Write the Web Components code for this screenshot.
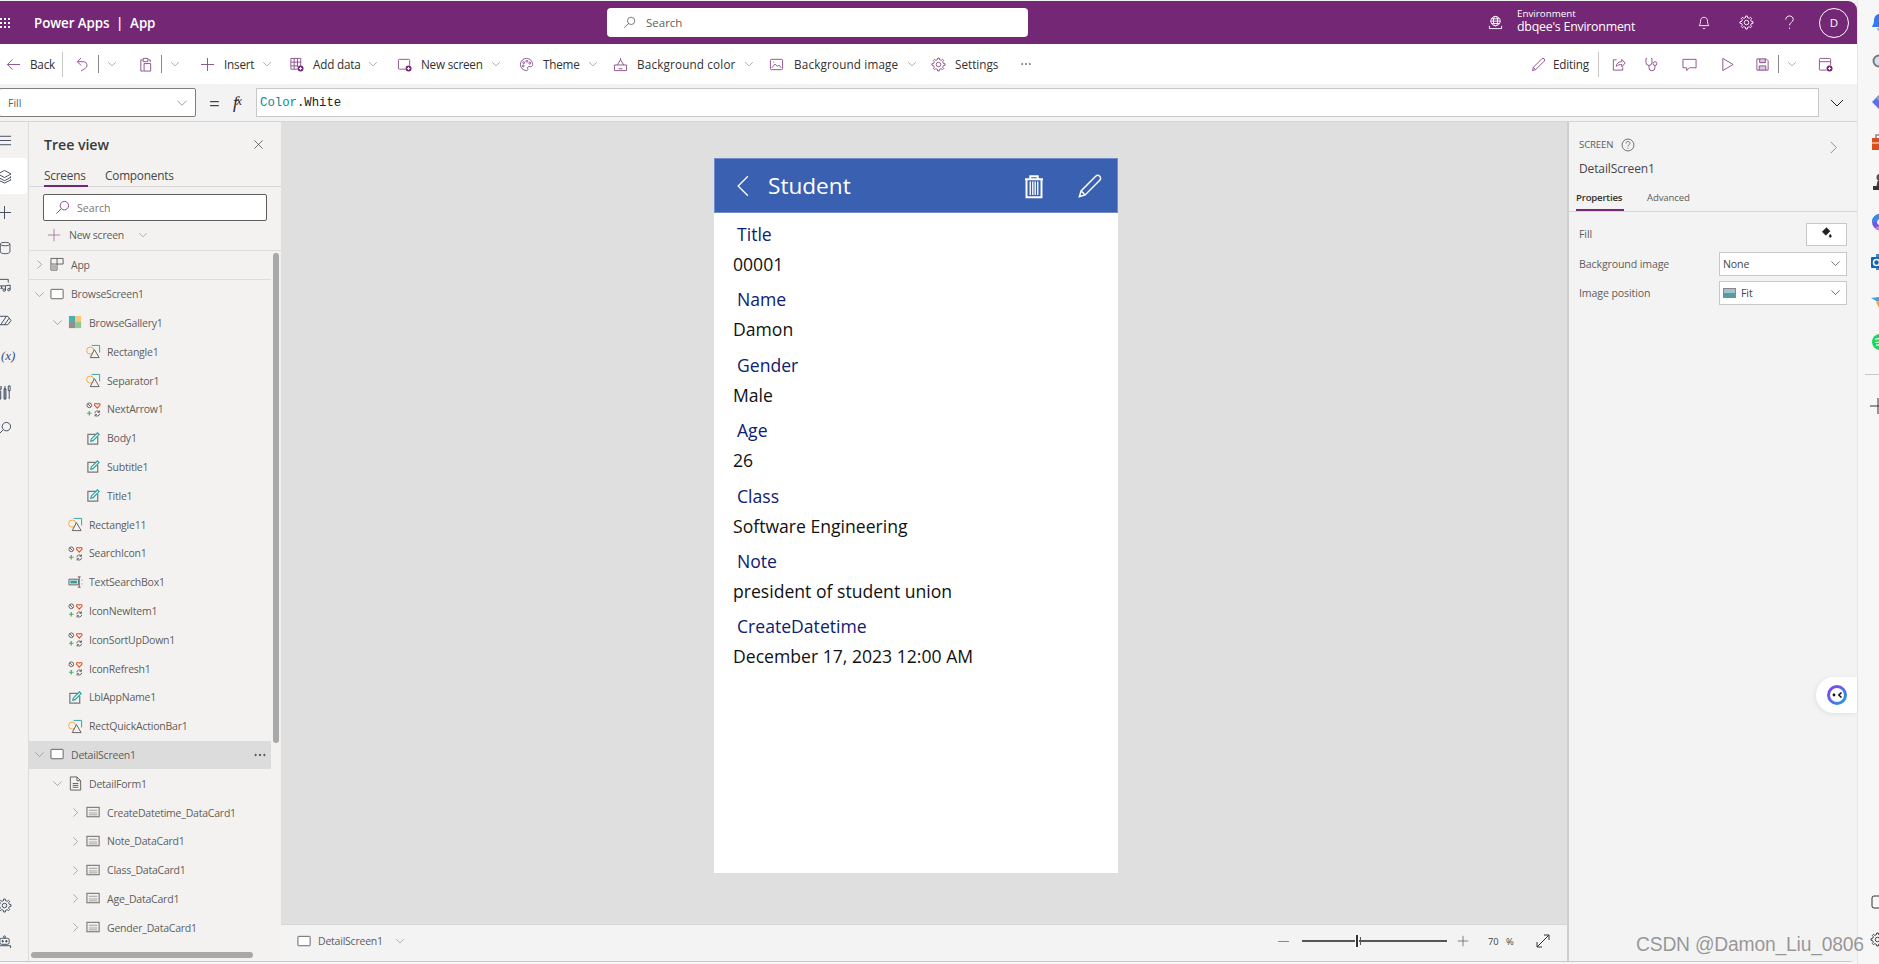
<!DOCTYPE html>
<html lang="en">
<head>
<meta charset="utf-8">
<title>Power Apps</title>
<style>
    html, body { margin: 0; height: 100%; overflow: hidden; background: #f7f7f7; }
    body { font-family: "Open Sans", "Noto Sans", sans-serif; font-size: 12px; color: #323130; }
</style>
</head>
<body>
<pa-app></pa-app>

<script>
function gear(c, r1, r2, n) {
    let d = '';
    for (let i = 0; i < n; i++) {
        const a = i * 2 * Math.PI / n, w = Math.PI / n;
        const pts = [[r1, a - w * 0.55], [r2, a - w * 0.3], [r2, a + w * 0.3], [r1, a + w * 0.55]];
        pts.forEach((p, j) => {
            const x = (c + p[0] * Math.cos(p[1])).toFixed(2), y = (c + p[0] * Math.sin(p[1])).toFixed(2);
            d += (i === 0 && j === 0 ? 'M' : 'L') + x + ' ' + y;
        });
    }
    return d + 'Z';
}

const PURPLE_DOT = '<circle cx="12.3" cy="12.3" r="3.2" fill="#742774" stroke="none"/><path d="M12.3 10.7v3.2M10.7 12.3h3.2" stroke="#fff"/>';

const icons = {
    back: '<path d="M15 8H1.5M7 2.5 1.5 8 7 13.5"/>',
    undo: '<path d="M6.5 1 2.5 5l4 4M2.5 5h6.5a3.8 3.8 0 0 1 1.5 7.3L6.5 15"/>',
    paste: '<path d="M5 3H3v12h3M11 3h2v2.5M5.5 1.5h5V5h-5zM6.5 7h7v8h-7z"/>',
    plus: '<path d="M8 1v14M1 8h14"/>',
    down: '<path d="m2 5 6 6 6-6"/>',
    right: '<path d="m5 2 6 6-6 6"/>',
    close: '<path d="m2 2 12 12M14 2 2 14"/>',
    table: '<path d="M2 1.5h10.5v8M2 1.5V13h7M2 5.5h10.5M2 9.5h8M5.5 1.5V13M9 1.5v9"/>' + PURPLE_DOT,
    newscreen: '<path d="M9 13H2.5a1 1 0 0 1-1-1V3.5a1 1 0 0 1 1-1h10a1 1 0 0 1 1 1V9"/>' + PURPLE_DOT,
    palette: '<path d="M8 1.5a6.5 6.5 0 1 0 0 13c1.6 0 1.8-1.2 1.2-2-.7-1 0-2.2 1.2-2.2h2.2c1.2 0 1.9-.8 1.9-2.3 0-3.600-2.900-6.500-6.500-6.500Z"/><circle cx="5" cy="6" r="1"/><circle cx="8.500" cy="4.500" r="1"/><circle cx="11.500" cy="6.500" r="1"/><circle cx="4.500" cy="9.500" r="1"/>',
    bgcolor: '<path d="M1.500 8.500h13v6h-13zM4.500 8.500 8 3l3.500 5.500M8 1v2"/><path d="M6 12.500h4"/>',
    bgimage: '<rect x="1.500" y="2.500" width="13" height="11" rx="1"/><path d="m3 11.500 3.500-4 2.500 2.500 1.500-1.500 2.500 3M4.500 5.500h1"/>',
    gear: '<path d="' + gear(8, 5.3, 7, 8) + '"/><circle cx="8" cy="8" r="2.400"/>',
    more: '<circle cx="3" cy="8" r=".8" fill="currentColor"/><circle cx="8" cy="8" r=".8" fill="currentColor"/><circle cx="13" cy="8" r=".8" fill="currentColor"/>',
    pencil: '<path d="M1.500 14.500 2.500 11 11.500 2a1.500 1.500 0 0 1 2.500 2.500L5 13.500ZM2.500 11 5 13.500"/>',
    share: '<path d="M6 3H2.500v11h10v-3"/><path d="M5.500 10c.3-3 2.500-5 6-5V2.500L15 6.500l-3.500 4V8c-2.500 0-4.500.5-6 2Z"/>',
    stetho: '<path d="M2 1.500H1v4.300a3.200 3.200 0 0 0 6.400 0V1.500h-1M4.200 9v2.500a3.200 3.200 0 0 0 6.400 0V9"/><circle cx="10.600" cy="7" r="2"/>',
    comment: '<path d="M1 2.500h14v9H8l-3 3v-3H1z"/>',
    play: '<path d="M3 1.500v13L14 8Z"/>',
    save: '<path d="M2 2h10l2 2v10H2zM5 2v4h6V2M4.500 14V9.500h7V14"/><path d="M5 10h6v4H5zM5 2.500h6V6H5z" fill="currentColor" opacity=".3"/>',
    calendar: '<path d="M9 14H2.500a1 1 0 0 1-1-1V2.500a1 1 0 0 1 1-1h10a1 1 0 0 1 1 1V9M1.500 5h12"/>' + PURPLE_DOT,
    search: '<circle cx="10" cy="6" r="4.500"/><path d="M6.800 9.200 1.500 14.500"/>',
    bell: '<path d="M8 1.500c-2.800 0-4 2-4 4.500 0 3-1.500 5-1.500 5h11S12 9 12 6c0-2.500-1.200-4.500-4-4.500ZM6.500 13.500a1.600 1.600 0 0 0 3 0"/>',
    globe: '<circle cx="8" cy="6.500" r="5"/><ellipse cx="8" cy="6.500" rx="2.200" ry="5"/><path d="M3 6.500h10M3.800 4h8.400M3.800 9h8.400M1.500 11.500V14.500h13v-3"/>',
    menu: '<path d="M0 3.500h15M0 8h15M0 12.500h15"/>',
    layers: '<path d="m8 1.500 7 3.800-7 3.800-7-3.800zM2 8l-1 .7L8 12.500l7-3.800-1-.7M2 10.800l-1 .7L8 15l7-3.500-1-.7"/>',
    db: '<ellipse cx="7" cy="3.500" rx="5.500" ry="2"/><path d="M1.500 3.500v9c0 1.100 2.500 2 5.500 2s5.500-.9 5.500-2v-9"/>',
    media: '<path d="M9 9.500H1v-7h11V6M3.500 12h3M5 9.500V12"/><path d="M9 14.500V9.500l5-1v5"/><circle cx="7.700" cy="14" r="1.300"/><circle cx="12.700" cy="13.500" r="1.300"/>',
    tags: '<path d="M1.500 3.500h10l3.500 4.500-3.500 4.500h-10zM4 12.500 10 3.500M8 12.500l5-7"/>',
    tools: '<path d="M3 1v5M1.500 1v3.500h3V1M3 6.500V15M2 6.500h2V15H2zM8.500 1v14M7.500 4h2v11h-2zM12 1h2v5h-2zM13 6v9"/>',
    bot: '<circle cx="8" cy="3" r="1"/><rect x="3" y="4.500" width="10" height="6.500" rx="2"/><path d="M1.500 15v-2.500h13V15"/><circle cx="6" cy="7.700" r=".8" fill="currentColor"/><circle cx="10" cy="7.700" r=".8" fill="currentColor"/>',
    trash: '<path d="M2 3.500h12M5.500 3.500V1.500h5v2M3 3.500h10v12H3z" stroke-width="1.300"/><path d="M5.500 5v9M7.200 5v9M8.800 5v9M10.500 5v9"/>',
    help: '<circle cx="8" cy="8" r="6.800"/><path d="M5.800 6.200C5.800 4.800 6.800 4 8 4s2.200.8 2.200 2c0 1.800-2.200 1.800-2.200 3.700M8 11.300v1"/>',
    bucket: '<path d="M8 1 2 7l5 5 6-6z" fill="currentColor"/><path d="M13.500 10.500s-1.500 2-1.500 3a1.500 1.500 0 0 0 3 0c0-1-1.500-3-1.500-3Z" fill="currentColor"/>',
    question: '<path d="M4 4.800C4 2.600 5.800 1 8 1s4 1.500 4 3.600c0 3.200-4 3.400-4 6.400M8 13.500v1.300"/>',

    screen: '<rect x="1" y="2.500" width="13" height="10" rx=".5" fill="#fff" stroke="#605e5c"/>',
    app: '<path d="M1 1.500h13v6h-6.500v6.500H1zM1 7.500h6.500V1.500" stroke="#605e5c"/><rect x="1.500" y="8" width="5.500" height="5.500" fill="#b5b3b1" stroke="none"/>',
    gallery: '<g stroke="none"><rect x="1" y="1" width="6.500" height="6.500" fill="#45b1b1"/><rect x="7.500" y="1" width="6.500" height="6.500" fill="#fcc57d"/><rect x="1" y="7.500" width="6.500" height="6.500" fill="#8f8f8f"/><rect x="7.500" y="7.500" width="6.500" height="6.500" fill="#8ecb8e"/></g>',
    shape: '<path d="M6 1.500h8.500V9" stroke="#2ea3a3"/><circle cx="4.500" cy="7" r="3.800" stroke="#f2a93b" fill="none"/><path d="M9 6 14 14.500H4.500Z" stroke="#605e5c" fill="#f3f2f1"/>',
    icons4: '<circle cx="3.500" cy="3.500" r="2.500" stroke="#605e5c"/><path d="M2 2l3 3" stroke="#605e5c"/><path d="M12 6.500 9.300 3.700c-1-1.300.8-3 2.700-1.500 1.900-1.500 3.700.2 2.700 1.500Z" stroke="#e3572e" stroke-width="1.200"/><path d="M3.500 9.500v5M1 12h5" stroke="#4caf63" stroke-width="1.300"/><path d="M9.500 12a2.500 2.500 0 0 1 4.500-1.500M14.500 12.500a2.500 2.500 0 0 1-4.500 1.500M14.300 9v2h-2M9.700 15.500v-2h2" stroke="#605e5c"/>',
    label: '<path d="M11 3.500H2v10.500h10.500V6.500" stroke="#7a7876" stroke-width="1.300"/><path d="m5 11 .7-2.500 6.500-6.500 1.800 1.800-6.500 6.500z" stroke="#1ea3a3" stroke-width="1.200"/>',
    textbox: '<path d="M1 4.500h10v6H1z" stroke="#605e5c"/><rect x="2.500" y="6" width="7" height="3" fill="#2a9c9c" stroke="none"/><path d="M10.500 2h3M12 2v11M10.500 13h3M14.500 5.500h.8M14.500 9.500h.8" stroke="#605e5c"/>',
    form: '<path d="M2.500 1h7l4 4v10h-11zM9.500 1v4h4M5 8h6M5 10h6M5 12h6" stroke="#605e5c"/>',
    card: '<rect x="1" y="2.500" width="13" height="10" stroke="#7a7876" stroke-width="1.200"/><rect x="3" y="5" width="9" height="1.500" fill="#b5b3b1" stroke="none"/><path d="M3 8.500h9M3 10.500h9" stroke="#a19f9d"/>'
};

class PaIcon extends HTMLElement {
    constructor() {
        super();
        this.attachShadow({ mode: 'open' });
    }

    connectedCallback() {
        const size = this.getAttribute('size') || 16;
        const name = this.getAttribute('name');
        this.shadowRoot.innerHTML = `
            <style>:host { display: inline-flex; flex: none; width: ${size}px; height: ${size}px; } svg { display: block; overflow: visible; }</style>
            <svg width="${size}" height="${size}" viewBox="0 0 16 16" fill="none" stroke="currentColor" stroke-width="${this.getAttribute('sw') || 1}">${icons[name] || ''}</svg>`;
    }
}

const headerTemplate = document.createElement('template');
headerTemplate.innerHTML = `
    <style>
        :host { display: flex; align-items: center; height: 43px; margin-top: 1px; background: #742774; color: #fff; border-top-right-radius: 9px; position: relative; }
        .waffle { display: grid; grid-template-columns: repeat(3, 2px); gap: 2px; margin-left: 0; width: 10px; }
        .waffle i { width: 2px; height: 2px; background: #fff; }
        .brand { margin-left: 24px; width: 573px; font-weight: 600; font-size: 13.4px; white-space: pre; letter-spacing: -.1px; }
        .search { display: flex; align-items: center; width: 421px; height: 29px; box-sizing: border-box; background: #fff; border-radius: 4px; color: #605e5c; padding-left: 16px; gap: 10px; font-size: 11.5px; }
        .env { display: flex; align-items: center; margin-left: 460px; width: 194px; gap: 14px; flex: none; }
        .env .t { line-height: 13px; margin-top: -6px; }
        .env small { display: block; font-size: 9.8px; }
        .env span { font-size: 12.4px; letter-spacing: -.25px; white-space: nowrap; }
        .act { width: 43px; display: flex; justify-content: center; }
        .avatar { box-sizing: border-box; width: 30px; height: 30px; border: 1px solid #fff; border-radius: 50%; display: flex; align-items: center; justify-content: center; font-size: 11.5px; margin-left: 8px; }
    </style>
    <div class="waffle"><i></i><i></i><i></i><i></i><i></i><i></i><i></i><i></i><i></i></div>
    <div class="brand">Power Apps  |  App</div>
    <div class="search"><pa-icon name="search" size="13"></pa-icon>Search</div>
    <div class="env">
        <pa-icon name="globe" size="15"></pa-icon>
        <div class="t"><small>Environment</small><span>dbqee's Environment</span></div>
    </div>
    <div class="act"><pa-icon name="bell" size="14"></pa-icon></div>
    <div class="act"><pa-icon name="gear" size="15"></pa-icon></div>
    <div class="act"><pa-icon name="question" size="15"></pa-icon></div>
    <div class="avatar">D</div>
`;

class PaHeader extends HTMLElement {
    constructor() {
        super();
        this.attachShadow({ mode: 'open' });
        this.shadowRoot.appendChild(headerTemplate.content.cloneNode(true));
    }
}

class TbItem extends HTMLElement {
    constructor() {
        super();
        this.attachShadow({ mode: 'open' });
    }

    connectedCallback() {
        const icon = this.getAttribute('icon');
        const label = this.getAttribute('label');
        const chev = this.hasAttribute('chevron');
        this.shadowRoot.innerHTML = `
            <style>
                :host { display: flex; align-items: center; flex: none; height: 100%; gap: 9px; color: #323130; font-size: 11.7px; letter-spacing: -.2px; white-space: nowrap; }
                pa-icon { color: #8b4f8b; }
                .c { margin-left: -1px; }
            </style>
            ${icon ? `<pa-icon name="${icon}" size="15"></pa-icon>` : ''}
            ${label ? `<span>${label}</span>` : ''}
            ${chev ? '<pa-icon class="c" name="down" size="10" style="color:#7d7b79"></pa-icon>' : ''}`;
    }
}

const toolbarTemplate = document.createElement('template');
toolbarTemplate.innerHTML = `
    <style>
        :host { display: flex; align-items: center; height: 40px; background: #fff; padding: 0 2px 0 6px; }
        .sep { flex: none; width: 1px; height: 25px; background: #c8c6c4; }
        .sep.s { height: 18px; background: #8a8886; }
        .sp { flex: 1; }
    </style>
    <tb-item icon="back" label="Back" style="width:56px"></tb-item>
    <div class="sep"></div>
    <tb-item icon="undo" style="width:23px;margin-left:12px"></tb-item>
    <div class="sep s"></div>
    <tb-item style="width:39px;padding-left:9px;box-sizing:border-box" chevron></tb-item>
    <tb-item icon="paste" style="width:23px"></tb-item>
    <div class="sep s"></div>
    <tb-item style="width:38px;padding-left:9px;box-sizing:border-box" chevron></tb-item>
    <tb-item icon="plus" label="Insert" style="width:89px" chevron></tb-item>
    <tb-item icon="table" label="Add data" style="width:108px" chevron></tb-item>
    <tb-item icon="newscreen" label="New screen" style="width:122px" chevron></tb-item>
    <tb-item icon="palette" label="Theme" style="width:94px" chevron></tb-item>
    <tb-item icon="bgcolor" label="Background color" style="width:156px;letter-spacing:.17px" chevron></tb-item>
    <tb-item icon="bgimage" label="Background image" style="width:162px;letter-spacing:.17px;gap:10px" chevron></tb-item>
    <tb-item icon="gear" label="Settings" style="width:89px;gap:9px;letter-spacing:0"></tb-item>
    <pa-icon name="more" size="12" style="color:#605e5c"></pa-icon>
    <div class="sp"></div>
    <tb-item icon="pencil" label="Editing" style="width:67px;gap:7px"></tb-item>
    <div class="sep"></div>
    <tb-item icon="share" style="width:34px;margin-left:12px"></tb-item>
    <tb-item icon="stetho" style="width:37px"></tb-item>
    <tb-item icon="comment" style="width:38px"></tb-item>
    <tb-item icon="play" style="width:35px"></tb-item>
    <tb-item icon="save" style="width:23px"></tb-item>
    <div class="sep s"></div>
    <tb-item style="width:39px;padding-left:9px;box-sizing:border-box" chevron></tb-item>
    <tb-item icon="calendar" style="width:37px"></tb-item>
`;

class PaToolbar extends HTMLElement {
    constructor() {
        super();
        this.attachShadow({ mode: 'open' });
        this.shadowRoot.appendChild(toolbarTemplate.content.cloneNode(true));
    }
}

const formulaTemplate = document.createElement('template');
formulaTemplate.innerHTML = `
    <style>
        :host { display: flex; align-items: center; height: 37px; background: #f3f3f3; border-bottom: 1px solid #d6d6d6; }
        .prop { display: flex; align-items: center; justify-content: space-between; box-sizing: border-box; width: 197px; height: 29px; margin-left: -1px; padding: 0 7px 0 8px; background: #fff; border: 1px solid #7f7d7b; border-radius: 2px; font-size: 10.5px; color: #605e5c; }
        .eq { width: 60px; display: flex; align-items: center; padding-left: 13px; box-sizing: border-box; font-size: 19px; color: #444; }
        .fx { margin-left: 13px; font: italic 17px "Liberation Serif", serif; color: #222; }
        .fx sup { font-size: 12px; vertical-align: 3px; line-height: 0; margin-left: -1px; }
        .input { box-sizing: border-box; width: 1563px; height: 29px; background: #fff; border: 1px solid #c8c8c8; padding-left: 3px; display: flex; align-items: center; font: 12.3px "Liberation Mono", monospace; color: #222; }
        .input b { font-weight: 400; color: #0a8a8f; }
        pa-icon.end { margin-left: 10px; color: #222; }
    </style>
    <div class="prop">Fill<pa-icon name="down" size="12" style="color:#7d7b79"></pa-icon></div>
    <div class="eq">=<span class="fx">f<sup>x</sup></span></div>
    <div class="input"><span><b>Color</b>.White</span></div>
    <pa-icon class="end" name="down" size="16"></pa-icon>
`;

class PaFormula extends HTMLElement {
    constructor() {
        super();
        this.attachShadow({ mode: 'open' });
        this.shadowRoot.appendChild(formulaTemplate.content.cloneNode(true));
    }
}

const railTemplate = document.createElement('template');
railTemplate.innerHTML = `
    <style>
        :host { display: flex; flex-direction: column; flex: none; width: 28px; box-sizing: content-box; background: #f3f2f1; border-right: 1px solid #dcdcdc; padding-bottom: 2px; color: #3d4a5c; }
        div { height: 36px; display: flex; align-items: center; justify-content: flex-start; padding-left: 0; margin-left: -3px; }
        .on { background: #fff; border-radius: 0 3px 3px 0; width: 30px; }
        .gap { flex: 1; }
        span { font: italic 13px "Liberation Serif", serif; color: #33507a; margin-left: 4px; }
    </style>
    <div><pa-icon name="menu" size="15"></pa-icon></div>
    <div class="on"><pa-icon name="layers" size="15"></pa-icon></div>
    <div><pa-icon name="plus" size="15"></pa-icon></div>
    <div><pa-icon name="db" size="14" style="margin-left:2px"></pa-icon></div>
    <div><pa-icon name="media" size="15"></pa-icon></div>
    <div><pa-icon name="tags" size="15"></pa-icon></div>
    <div><span>(x)</span></div>
    <div><pa-icon name="tools" size="15"></pa-icon></div>
    <div><pa-icon name="search" size="15"></pa-icon></div>
    <div class="gap"></div>
    <div><pa-icon name="gear" size="15"></pa-icon></div>
    <div><pa-icon name="bot" size="15"></pa-icon></div>
`;

class PaRail extends HTMLElement {
    constructor() {
        super();
        this.attachShadow({ mode: 'open' });
        this.shadowRoot.appendChild(railTemplate.content.cloneNode(true));
    }
}

class TreeRow extends HTMLElement {
    constructor() {
        super();
        this.attachShadow({ mode: 'open' });
    }

    connectedCallback() {
        const depth = Number(this.getAttribute('depth') || 0);
        const exp = this.getAttribute('expand');
        const selected = this.hasAttribute('selected');
        this.shadowRoot.innerHTML = `
            <style>
                :host { display: flex; align-items: center; height: 28.8px; box-sizing: border-box; width: 242px; padding-left: ${5 + depth * 18}px; white-space: nowrap; color: #605e5c; font-size: 10.5px; letter-spacing: -.22px; position: relative; }
                :host([selected]) { background: #dcdcdc; }
                :host([line]) { border-bottom: 1px solid #dcdcdc; }
                .x { width: 10px; margin-right: 6px; display: flex; color: #8a8886; }
                span { margin-left: 6px; }
                .more { position: absolute; right: 4px; top: 7px; color: #444; }
            </style>
            <div class="x">${exp ? `<pa-icon name="${exp}" size="11"></pa-icon>` : ''}</div>
            <pa-icon name="${this.getAttribute('icon')}" size="15"></pa-icon>
            <span>${this.getAttribute('label')}</span>
            ${selected ? '<pa-icon class="more" name="more" size="14"></pa-icon>' : ''}`;
    }
}

const treeTemplate = document.createElement('template');
treeTemplate.innerHTML = `
    <style>
        :host { display: flex; flex-direction: column; flex: none; width: 252px; background: #f3f2f1; position: relative; overflow: hidden; }
        .head { display: flex; align-items: center; justify-content: space-between; height: 44px; padding: 0 17px 0 15px; font-weight: 600; font-size: 14.2px; letter-spacing: -.05px; color: #3b3a39; }
        .tabs { display: flex; gap: 17px; height: 20px; padding-left: 15px; border-bottom: 1px solid #d6d6d6; font-size: 11.8px; letter-spacing: -.2px; color: #484644; line-height: 18px; }
        .tabs .on { border-bottom: 2px solid #742774; width: 44px; height: 19px; }
        .box { display: flex; align-items: center; box-sizing: border-box; margin: 7px 0 0 14px; width: 224px; height: 27px; background: #fff; border: 1px solid #605e5c; border-radius: 2px; padding-left: 11px; gap: 7px; color: #7a7876; font-size: 10.6px; }
        .box pa-icon { color: #8b3f8b; }
        .new { display: flex; align-items: center; height: 30px; box-sizing: border-box; border-bottom: 1px solid #dcdcdc; padding: 0 0 2px 18px; gap: 8px; font-size: 10.5px; letter-spacing: -.22px; color: #605e5c; }
        .rows { flex: 1; overflow: hidden; }
        .v, .h { position: absolute; background: #a8a8a8; border-radius: 3px; }
        .v { right: 2px; top: 131px; width: 6px; height: 490px; }
        .h { left: 2px; bottom: 3px; width: 222px; height: 6px; }
    </style>
    <div class="head">Tree view<pa-icon name="close" size="11"></pa-icon></div>
    <div class="tabs"><div class="on">Screens</div><div>Components</div></div>
    <div class="box"><pa-icon name="search" size="15"></pa-icon>Search</div>
    <div class="new"><pa-icon name="plus" size="14" style="color:#a673a6"></pa-icon>New screen<pa-icon name="down" size="10" style="color:#8a8886;margin-left:6px"></pa-icon></div>
    <div class="rows">
        <tree-row depth="0" expand="right" icon="app" label="App" line></tree-row>
        <tree-row depth="0" expand="down" icon="screen" label="BrowseScreen1"></tree-row>
        <tree-row depth="1" expand="down" icon="gallery" label="BrowseGallery1"></tree-row>
        <tree-row depth="2" icon="shape" label="Rectangle1"></tree-row>
        <tree-row depth="2" icon="shape" label="Separator1"></tree-row>
        <tree-row depth="2" icon="icons4" label="NextArrow1"></tree-row>
        <tree-row depth="2" icon="label" label="Body1"></tree-row>
        <tree-row depth="2" icon="label" label="Subtitle1"></tree-row>
        <tree-row depth="2" icon="label" label="Title1"></tree-row>
        <tree-row depth="1" icon="shape" label="Rectangle11"></tree-row>
        <tree-row depth="1" icon="icons4" label="SearchIcon1"></tree-row>
        <tree-row depth="1" icon="textbox" label="TextSearchBox1"></tree-row>
        <tree-row depth="1" icon="icons4" label="IconNewItem1"></tree-row>
        <tree-row depth="1" icon="icons4" label="IconSortUpDown1"></tree-row>
        <tree-row depth="1" icon="icons4" label="IconRefresh1"></tree-row>
        <tree-row depth="1" icon="label" label="LblAppName1"></tree-row>
        <tree-row depth="1" icon="shape" label="RectQuickActionBar1"></tree-row>
        <tree-row depth="0" expand="down" icon="screen" label="DetailScreen1" selected></tree-row>
        <tree-row depth="1" expand="down" icon="form" label="DetailForm1"></tree-row>
        <tree-row depth="2" expand="right" icon="card" label="CreateDatetime_DataCard1"></tree-row>
        <tree-row depth="2" expand="right" icon="card" label="Note_DataCard1"></tree-row>
        <tree-row depth="2" expand="right" icon="card" label="Class_DataCard1"></tree-row>
        <tree-row depth="2" expand="right" icon="card" label="Age_DataCard1"></tree-row>
        <tree-row depth="2" expand="right" icon="card" label="Gender_DataCard1"></tree-row>
    </div>
    <div class="v"></div>
    <div class="h"></div>
`;

class PaTree extends HTMLElement {
    constructor() {
        super();
        this.attachShadow({ mode: 'open' });
        this.shadowRoot.appendChild(treeTemplate.content.cloneNode(true));
    }
}

const fieldTemplate = document.createElement('template');
fieldTemplate.innerHTML = `
    <style>
        :host { display: block; height: 65.4px; padding-left: 19px; font-family: "Open Sans", sans-serif; font-size: 17.6px; line-height: 30px; white-space: nowrap; }
        .l { padding-left: 4px; color: #0e2070; }
        .v { color: #111; }
    </style>
    <div class="l"><slot name="label"></slot></div>
    <div class="v"><slot></slot></div>
`;

class PaField extends HTMLElement {
    constructor() {
        super();
        this.attachShadow({ mode: 'open' });
        this.shadowRoot.appendChild(fieldTemplate.content.cloneNode(true));
    }
}

const phoneTemplate = document.createElement('template');
phoneTemplate.innerHTML = `
    <style>
        :host { display: block; width: 404px; height: 715px; background: #fff; font-family: "Open Sans", sans-serif; }
        .bar { display: flex; align-items: center; height: 55px; box-sizing: border-box; background: #3a60b2; border: 1px solid #6f8ccb; color: #fff; padding-left: 20px; }
        .t { font-size: 22.6px; width: 254px; margin-left: 12px; }
        .f { padding-top: 6px; }
    </style>
    <div class="bar">
        <pa-icon name="right" size="26" style="transform:scaleX(-1);margin-left:-5px" sw=".8"></pa-icon>
        <div class="t">Student</div>
        <pa-icon name="trash" size="24" sw=".9"></pa-icon>
        <pa-icon name="pencil" size="26" style="margin-left:31px" sw=".9"></pa-icon>
    </div>
    <div class="f"><slot></slot></div>
`;

class PaPhone extends HTMLElement {
    constructor() {
        super();
        this.attachShadow({ mode: 'open' });
        this.shadowRoot.appendChild(phoneTemplate.content.cloneNode(true));
    }
}

const canvasTemplate = document.createElement('template');
canvasTemplate.innerHTML = `
    <style>
        :host { display: flex; flex-direction: column; flex: none; width: 1286px; background: #dfdfdf; }
        .stage { flex: 1; padding: 36px 0 0 433px; }
        .bar { display: flex; align-items: center; height: 37px; box-sizing: border-box; background: #f3f3f3; border-top: 1px solid #d6d6d6; padding: 0 0 4px 16px; font-size: 10.5px; letter-spacing: -.22px; color: #605e5c; }
        .name { margin-left: 6px; width: 75px; }
        .minus { margin-left: 873px; width: 11px; height: 1px; background: #8a8886; }
        .track { position: relative; margin-left: 13px; width: 145px; height: 2px; background: #555; }
        .thumb { position: absolute; left: 53px; top: -5px; width: 2px; height: 12px; background: #333; border: 1px solid #fff; border-width: 0 1px; }
        .tick { position: absolute; left: 58px; top: -3px; width: 1px; height: 8px; background: #555; }
        .zoom { width: 18px; margin-left: 19px; font-size: 9.4px; color: #444; }
        .pct { width: 30px; font-size: 9.4px; color: #444; }
    </style>
    <div class="stage"><slot></slot></div>
    <div class="bar">
        <pa-icon name="screen" size="15"></pa-icon>
        <span class="name">DetailScreen1</span>
        <pa-icon name="down" size="10" style="color:#8a8886;margin-left:2px"></pa-icon>
        <div class="minus"></div>
        <div class="track"><div class="thumb"></div><div class="tick"></div></div>
        <pa-icon name="plus" size="12" style="margin-left:10px;color:#605e5c"></pa-icon>
        <span class="zoom">70</span><span class="pct">%</span>
        <svg width="14" height="14" viewBox="0 0 14 14" fill="none" stroke="#333"><path d="M1 13 13 1M8 1h5v5M1 8v5h5"/></svg>
    </div>
`;

class PaCanvas extends HTMLElement {
    constructor() {
        super();
        this.attachShadow({ mode: 'open' });
        this.shadowRoot.appendChild(canvasTemplate.content.cloneNode(true));
    }
}

const propsTemplate = document.createElement('template');
propsTemplate.innerHTML = `
    <style>
        :host { display: block; flex: none; width: 290px; box-sizing: border-box; background: #f3f3f3; border-left: 2px solid #cfcfcf; color: #605e5c; font-size: 10.6px; letter-spacing: -.12px; }
        .top { display: flex; align-items: center; height: 45px; padding: 0 16px 0 10px; gap: 8px; font-size: 9.6px; }
        .top .r { margin-left: auto; color: #8a8886; margin-top: 5px; }
        .name { padding-left: 10px; font-size: 12px; line-height: 18px; color: #484644; height: 17px; margin-top: -7px; }
        .tabs { display: flex; gap: 23px; padding-left: 7px; height: 24px; margin-top: 11px; line-height: 20px; border-bottom: 1px solid #d6d6d6; font-size: 9.6px; box-sizing: border-box; }
        .tabs b { font-weight: 600; color: #323130; border-bottom: 2px solid #742774; box-sizing: border-box; width: 48px; height: 23px; white-space: nowrap; letter-spacing: -.2px; }
        .row { display: flex; align-items: center; justify-content: space-between; padding: 0 10px 0 10px; height: 29px; }
        .row.first { margin-top: 11px; height: 26px; align-items: flex-start; line-height: 23px; }
        .sel { display: flex; align-items: center; justify-content: space-between; box-sizing: border-box; width: 128px; height: 24px; background: #fff; border: 1px solid #c8c8c8; padding: 0 5px 0 3px; color: #484644; font-size: 10.6px; }
        .sel span { display: flex; align-items: center; gap: 5px; }
        .sel pa-icon { color: #333; }
        .fill { display: flex; justify-content: center; padding-top: 3px; box-sizing: border-box; width: 41px; height: 23px; background: #fff; border: 1px solid #c8c8c8; color: #222; }
        .pic { width: 11px; height: 8px; background: linear-gradient(#9fc4cf 50%, #5a9aa0 50%); border: 1px solid #888; }
    </style>
    <div class="top">SCREEN<pa-icon name="help" size="14"></pa-icon><pa-icon class="r" name="right" size="15"></pa-icon></div>
    <div class="name">DetailScreen1</div>
    <div class="tabs"><b>Properties</b><span>Advanced</span></div>
    <div class="row first">Fill<div class="fill"><pa-icon name="bucket" size="11"></pa-icon></div></div>
    <div class="row">Background image<div class="sel"><span>None</span><pa-icon name="down" size="11"></pa-icon></div></div>
    <div class="row">Image position<div class="sel"><span><i class="pic"></i>Fit</span><pa-icon name="down" size="11"></pa-icon></div></div>
`;

class PaProps extends HTMLElement {
    constructor() {
        super();
        this.attachShadow({ mode: 'open' });
        this.shadowRoot.appendChild(propsTemplate.content.cloneNode(true));
    }
}

const edgeTemplate = document.createElement('template');
edgeTemplate.innerHTML = `
    <style>
        :host { display: flex; flex-direction: column; flex: none; width: 22px; height: 964px; border-left: 1px solid #e6e6e6; box-sizing: border-box; overflow: hidden; padding-left: 13px; padding-top: 2px; }
        .i { height: 40px; flex: none; display: flex; align-items: center; }
        svg { flex: none; width: 18px; height: 18px; display: block; }
        hr { flex: none; margin: 12px 0 0 -6px; width: 20px; border: 0; border-top: 1px solid #c8c8c8; height: 0; }
        .gap { flex: 1; }
    </style>
    <div class="i"><svg viewBox="0 0 18 18"><path d="M9 1C5 1 3 4 3 8c0 3-2 5-2 6h16c0-1-2-3-2-6 0-4-2-7-6-7Z" fill="#2f7bf2"/><path d="M6 15h6c0 2-1 3-3 3s-3-1-3-3Z" fill="#7fb4f7"/></svg></div>
    <div class="i"><svg viewBox="0 0 18 18"><circle cx="8" cy="8" r="5.500" fill="#cfe3f5" stroke="#7a7a7a" stroke-width="2"/></svg></div>
    <div class="i"><svg viewBox="0 0 18 18"><path d="M9 1 17 9l-8 8-8-8Z" fill="#5a6ff0"/><path d="M9 1 17 9l-4 4-8-8Z" fill="#66a5f5"/></svg></div>
    <div class="i"><svg viewBox="0 0 18 18"><rect x="1" y="5" width="17" height="12" fill="#d8501e"/><rect x="1" y="9" width="17" height="2" fill="#f2a17a"/><path d="M5 5V2h7v3" fill="none" stroke="#888" stroke-width="1.500"/></svg></div>
    <div class="i"><svg viewBox="0 0 18 18"><circle cx="9" cy="4.500" r="3.500" fill="#555"/><path d="M6.500 8h5l1 5h-7Z" fill="#444"/><rect x="2" y="13" width="14" height="4" fill="#333"/></svg></div>
    <div class="i"><svg viewBox="0 0 18 18"><path d="M9 1a8 8 0 1 0 0 16h5v-5H9a3 3 0 0 1 0-6h5V1Z" fill="#6b5be0"/><path d="M1 9a8 8 0 0 1 8-8v5a3 3 0 0 0-3 3Z" fill="#2f8fe8"/><path d="M4 15a8 8 0 0 0 10 2v-5H9Z" fill="#c27fe0"/></svg></div>
    <div class="i"><svg viewBox="0 0 18 18"><rect x="5" y="1" width="13" height="16" fill="#2a8fd8"/><rect x="0" y="4" width="11" height="11" rx="1" fill="#0f65b8"/><circle cx="5.500" cy="9.500" r="3" fill="none" stroke="#fff" stroke-width="1.500"/></svg></div>
    <div class="i"><svg viewBox="0 0 18 18"><path d="M0 5 18 3 9 10Z" fill="#3aa0e8"/><path d="M5 9 18 3l-5 12-3-4-2 4Z" fill="#f2a93b"/></svg></div>
    <div class="i"><svg viewBox="0 0 18 18"><circle cx="9" cy="9" r="8" fill="#1ed760"/><path d="M4 6.500c3-1 7-1 10 .5M4.500 9.500c3-.8 6-.6 8.500.6M5 12.300c2.500-.6 5-.4 7 .6" stroke="#fff" stroke-width="1.200" fill="none"/></svg></div>
    <hr>
    <div class="i" style="margin-top:11px"><svg viewBox="0 0 18 18" style="margin-left:-2px"><path d="M9 1v16M1 9h16" stroke="#333" fill="none"/></svg></div>
    <div class="gap"></div>
    <div class="i" style="height:36px"><svg viewBox="0 0 18 18"><rect x="1" y="3" width="17" height="12" rx="2" fill="none" stroke="#333"/></svg></div>
    <div class="i" style="height:44px;padding-bottom:5px;box-sizing:border-box"><pa-icon name="gear" size="15" style="color:#333;margin-left:-1px"></pa-icon></div>
`;

class PaEdgebar extends HTMLElement {
    constructor() {
        super();
        this.attachShadow({ mode: 'open' });
        this.shadowRoot.appendChild(edgeTemplate.content.cloneNode(true));
    }
}

const appTemplate = document.createElement('template');
appTemplate.innerHTML = `
    <style>
        :host { display: flex; width: 1879px; height: 964px; position: relative; overflow: hidden; }
        .main { display: flex; flex-direction: column; width: 1857px; height: 962px; box-sizing: border-box; border-bottom: 1px solid #c8c8c8; border-bottom-right-radius: 8px; background: #f3f3f3; }
        .body { display: flex; flex: 1; min-height: 0; }
        .copilot { position: absolute; left: 1816px; top: 677px; width: 41px; height: 36px; box-sizing: border-box; background: #fff; border-radius: 18px 0 0 18px; box-shadow: -1px 1px 5px rgba(0,0,0,.08); display: flex; align-items: center; justify-content: center; }
        .mark { position: absolute; left: 1636px; top: 933px; font: 19.3px/24px "Liberation Sans", sans-serif; color: rgba(120,120,120,.75); white-space: nowrap; letter-spacing: -.2px; }
    </style>
    <div class="main">
        <pa-header></pa-header>
        <pa-toolbar></pa-toolbar>
        <pa-formula></pa-formula>
        <div class="body">
            <pa-rail></pa-rail>
            <pa-tree></pa-tree>
            <pa-canvas>
                <pa-phone>
                    <pa-field><span slot="label">Title</span>00001</pa-field>
                    <pa-field><span slot="label">Name</span>Damon</pa-field>
                    <pa-field><span slot="label">Gender</span>Male</pa-field>
                    <pa-field><span slot="label">Age</span>26</pa-field>
                    <pa-field><span slot="label">Class</span>Software Engineering</pa-field>
                    <pa-field><span slot="label">Note</span>president of student union</pa-field>
                    <pa-field><span slot="label">CreateDatetime</span>December 17, 2023 12:00 AM</pa-field>
                </pa-phone>
            </pa-canvas>
            <pa-props></pa-props>
        </div>
    </div>
    <pa-edgebar></pa-edgebar>
    <div class="copilot">
        <svg width="22" height="22" viewBox="0 0 22 22">
            <defs><linearGradient id="g" x1="0" y1="0" x2="1" y2="1"><stop offset="0" stop-color="#8a3fe8"/><stop offset="1" stop-color="#1e9be8"/></linearGradient></defs>
            <circle cx="11" cy="11" r="8.500" fill="#fff" stroke="url(#g)" stroke-width="3"/>
            <circle cx="8" cy="11" r="1.400" fill="#111"/><path d="M15.500 8.500 12.800 11l2.700 2.500" fill="none" stroke="#111" stroke-width="1.500"/>
        </svg>
    </div>
    <div class="mark">CSDN @Damon_Liu_0806</div>
`;

class PaApp extends HTMLElement {
    constructor() {
        super();
        this.attachShadow({ mode: 'open' });
        this.shadowRoot.appendChild(appTemplate.content.cloneNode(true));
    }
}

customElements.define('pa-icon', PaIcon);
customElements.define('pa-header', PaHeader);
customElements.define('tb-item', TbItem);
customElements.define('pa-toolbar', PaToolbar);
customElements.define('pa-formula', PaFormula);
customElements.define('pa-rail', PaRail);
customElements.define('tree-row', TreeRow);
customElements.define('pa-tree', PaTree);
customElements.define('pa-field', PaField);
customElements.define('pa-phone', PaPhone);
customElements.define('pa-canvas', PaCanvas);
customElements.define('pa-props', PaProps);
customElements.define('pa-edgebar', PaEdgebar);
customElements.define('pa-app', PaApp);
</script>
</body>
</html>
